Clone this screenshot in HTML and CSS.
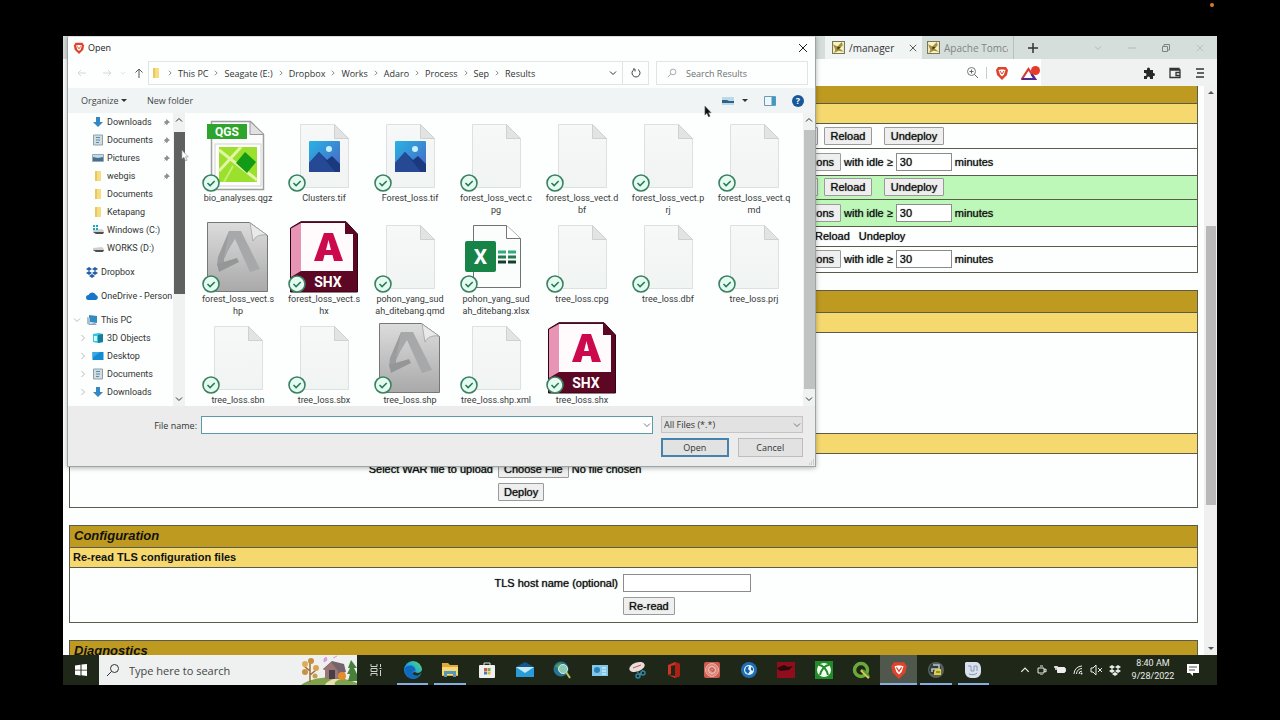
FILE: index.html
```html
<!DOCTYPE html>
<html lang="en">
<head>
<meta charset="utf-8">
<title>/manager</title>
<link rel="stylesheet" href="styles.css">
</head>
<body>
<svg class="defs" aria-hidden="true">
  <defs>
    <linearGradient id="paper" x1="0" y1="0" x2="0" y2="1"><stop offset="0" stop-color="#f7f8f8"/><stop offset="1" stop-color="#f0f4f2"/></linearGradient>
    <linearGradient id="steel" x1="0" y1="0" x2="0" y2="1"><stop offset="0" stop-color="#dcdcdc"/><stop offset="1" stop-color="#a9a9a9"/></linearGradient>
    <linearGradient id="sky" x1="0" y1="0" x2="1" y2="1"><stop offset="0" stop-color="#27b4e4"/><stop offset="1" stop-color="#4d61c4"/></linearGradient>
    <linearGradient id="edge" x1="0" y1="1" x2="1" y2="0"><stop offset="0" stop-color="#0b5fc0"/><stop offset=".5" stop-color="#1ca6dd"/><stop offset="1" stop-color="#62dd65"/></linearGradient>
  </defs>
  <symbol id="ok" viewBox="0 0 18 18"><circle cx="9" cy="9" r="8" fill="#e4fbf0" stroke="#3b8062" stroke-width="1.600"/><path d="M5.500 9l2.600 2.600 4.600-4.700" fill="none" stroke="#28795a" stroke-width="1.500"/></symbol>
  <symbol id="blank" viewBox="0 0 72 72"><path d="M12.500 4.500h34l14 14v49h-48z" fill="url(#paper)" stroke="#dedfe0"/><path d="M46.500 4.500v14h14z" fill="#e2e3e3" stroke="#cfd0d1"/></symbol>
  <symbol id="tif" viewBox="0 0 72 72"><use href="#blank"/><rect x="21" y="21" width="31" height="31" rx="1" fill="url(#sky)"/><path d="M21 43l10-11 8 8 5-4 8 8v8H21z" fill="#1b397f"/><path d="M21 43l10-11 16 20H21z" fill="#254995"/><circle cx="41" cy="29" r="3" fill="#c5f2ff"/></symbol>
  <symbol id="qgs" viewBox="0 0 72 72"><path d="M9.500 1.500h39l13 13v55h-52z" fill="#fbfcfb" stroke="#9da09f" stroke-width="1.500"/><path d="M48 1.500v13h14z" fill="#e1e1e1" stroke="#999"/><rect x="13" y="24" width="46" height="42" fill="#fff" stroke="#cfd3cd"/><rect x="17" y="27" width="38" height="35" fill="#9be02c"/><path d="M17 30l38 30M17 51l22-24" stroke="#e3f5a4" stroke-width="3" fill="none"/><path d="M31 46l-9 16" stroke="#c4ee74" stroke-width="2" fill="none"/><path d="M43 32l11 10-9 11-11-10z" fill="#119b16"/><rect x="5" y="4" width="40" height="15" fill="#2da52c"/><text x="25" y="16" text-anchor="middle" class="ic-text" font-size="12">QGS</text></symbol>
  <symbol id="shp" viewBox="0 0 72 72"><path d="M5.500 1.500h42l18 13v56h-60z" fill="url(#steel)" stroke="#777"/><path d="M48 2l3 18c2-4 6-7 14-6z" fill="#e9e9e9" stroke="#999" stroke-width=".7"/><path d="M27 10h8L22 38v9l-7-3 1-8z" fill="#9b9c9d"/><path d="M27 10h12l19 38-10 3-15-33-11 18z" fill="#a7a8a9"/><path d="M15 43l20-6 2 4-20 10z" fill="#959697"/></symbol>
  <symbol id="shx" viewBox="0 0 72 72"><path d="M2.500 7L13 .700h45L69.500 13v58H2.500z" fill="#5c0724" stroke="#310413"/><path d="M3 7.500L13 2v48L3 56z" fill="#e895b5"/><path d="M13 2h44v11h8v37H13z" fill="#fffafb"/><path d="M36 12h9l10 28h-9l-1.500-6h-8L35 40h-9zM40.500 19l-2.500 10h5z" fill="#cc094c" fill-rule="evenodd"/><text x="40" y="66" text-anchor="middle" class="ic-text" font-size="14">SHX</text></symbol>
  <symbol id="xlsx" viewBox="0 0 72 72"><path d="M13.500 4.500h33l14 13v49h-47z" fill="#fbfcfc" stroke="#6f7373"/><path d="M46.500 4.500v13h14" fill="#fff" stroke="#777"/><rect x="5" y="20" width="31" height="31" rx="2" fill="#178347"/><path d="M38 31h8m2 0h8" stroke="#31ac78" stroke-width="3"/><path d="M38 36h8m2 0h8" stroke="#207b50" stroke-width="3"/><path d="M38 41h8m2 0h8" stroke="#173e2c" stroke-width="3"/><text x="20.500" y="43" text-anchor="middle" class="ic-text" font-size="21">X</text></symbol>
  <symbol id="folder" viewBox="0 0 12 12"><path d="M3 1h6v10H3z" fill="#f5dd83"/><path d="M3 1h2v10H3z" fill="#e9c75c"/></symbol>
  <symbol id="down" viewBox="0 0 12 12"><path d="M4 1h4v5h3l-5 5-5-5h3z" fill="#3287c4"/></symbol>
  <symbol id="docs" viewBox="0 0 12 12"><path d="M1.500 1h9v10h-9z" fill="#cfdce1" stroke="#8ea2aa"/><path d="M4 3.500h4M4 6h4M4 8.500h3" stroke="#5c8aa0"/></symbol>
  <symbol id="pics" viewBox="0 0 12 12"><path d="M.500 2.500h11v7H.500z" fill="#bfdbe9" stroke="#98a9b3"/><path d="M1 5l5 1 5-1v4H1z" fill="#46708b"/></symbol>
  <symbol id="drive" viewBox="0 0 12 12"><path d="M1 6l9-1 2 2-1 3H4L1 8z" fill="#cfcfcf"/><path d="M1 8l3 2h7l1-2H4z" fill="#4d4f50"/></symbol>
  <symbol id="windrive" viewBox="0 0 12 12"><use href="#drive"/><path d="M1 1h2v2H1zm3 0h2v2H4zM1 4h2v2H1zm3 0h2v2H4z" fill="#1aa6cb"/></symbol>
  <symbol id="dropbox" viewBox="0 0 12 12"><path d="M3 1l3 2-3 2-3-2zm6 0l3 2-3 2-3-2zM3 5l3 2-3 2-3-2zm6 0l3 2-3 2-3-2zM6 8l3 2-3 2-3-2z" fill="currentColor"/></symbol>
  <symbol id="cloud" viewBox="0 0 12 12"><path d="M2.500 10a2.500 2.500 0 010-5A4 4 0 0110 5a2.600 2.600 0 010 5z" fill="#1877c9"/></symbol>
  <symbol id="pc" viewBox="0 0 12 12"><path d="M3 1l8 1v7L3 8z" fill="#328bc3"/><path d="M1 3l3 1v6H1z" fill="#abc0cc"/><path d="M2 10l7-1 2 2H3z" fill="#88a8ba"/></symbol>
  <symbol id="cube" viewBox="0 0 12 12"><path d="M1 2l6-1 4 1v8l-5 1-5-1z" fill="#38c3dc"/><path d="M6 3l5-1v8l-5 1z" fill="#127f9c"/><path d="M2 4h3v5H2z" fill="#d0f8ff"/></symbol>
  <symbol id="desk" viewBox="0 0 12 12"><path d="M.500 2h11v8H.500z" fill="#118bd1"/><path d="M.500 2H8L.500 8z" fill="#38a7e7"/></symbol>
  <symbol id="pin" viewBox="0 0 8 8"><path d="M4 0l4 4-2 .500L4.500 7 3 5.500 0 8l2.500-3L1 3.500 3.500 2z" fill="#8a9192"/></symbol>
  <symbol id="cr" viewBox="0 0 8 8"><path d="M2.500 1l3 3-3 3" fill="none" stroke="currentColor"/></symbol>
  <symbol id="cd" viewBox="0 0 8 8"><path d="M1 2.500l3 3 3-3" fill="none" stroke="currentColor"/></symbol>
  <symbol id="cu" viewBox="0 0 8 8"><path d="M1 5.500l3-3 3 3" fill="none" stroke="currentColor" stroke-width="1"/></symbol>
  <symbol id="x" viewBox="0 0 10 10"><path d="M1 1l8 8M9 1L1 9" fill="none" stroke="currentColor"/></symbol>
  <symbol id="glass" viewBox="0 0 14 14"><circle cx="8.500" cy="5.500" r="4" fill="none" stroke="currentColor"/><path d="M5.500 8.500L1 13" stroke="currentColor"/></symbol>
  <symbol id="brave" viewBox="0 0 14 14"><path d="M3 1h8l2 3-1 5-5 5-5-5-1-5z" fill="#e0432c"/><path d="M3.500 4L6 3.500h2l2.500.500L9 8.500l-2 2-2-2z" fill="#fff" /><path d="M5 5l2 3 2-3" stroke="#dd4731" fill="none"/></symbol>
  <symbol id="tomcat" viewBox="0 0 12 12"><path d="M.500.500h11v11H.500z" fill="#f8f2c5" stroke="#77765b"/><path d="M1 3l4 2 4-4 1 3-3 3 4 3-5-1-4 2 1-3z" fill="#a4913c"/><path d="M5 5l3 1-3 2" fill="#393a2a"/></symbol>
  <symbol id="arrow" viewBox="0 0 10 14"><path d="M1 1v10l2.300-2 1.700 4 1.800-.800L5 8.500h3z" fill="currentColor" stroke="#777" stroke-width=".6"/></symbol>
</svg>

<div class="screen">
  <span class="rec"></span>
  <main class="browser">
    <div class="tabs">
      <div class="tab active"><svg class="i13"><use href="#tomcat"/></svg><span>/manager</span><button aria-label="Close tab"><svg class="i8"><use href="#x"/></svg></button></div>
      <div class="tab"><svg class="i13"><use href="#tomcat"/></svg><span class="cut">Apache Tomcat</span></div>
      <button class="newtab" aria-label="New tab"><svg class="i10" viewBox="0 0 10 10"><path d="M5 0v10M0 5h10" stroke="#333" stroke-width="1.500"/></svg></button>
      <div class="winctl">
        <button aria-label="Tab search"><svg class="i8"><use href="#cd"/></svg></button>
        <button aria-label="Minimize"><svg class="i8" viewBox="0 0 8 8"><path d="M0 4h8" stroke="currentColor"/></svg></button>
        <button aria-label="Restore"><svg class="i8 dark" viewBox="0 0 8 8"><path d="M.500 2.500h5v5h-5zM2 2V.500h5.500V6H6" fill="none" stroke="currentColor"/></svg></button>
        <button aria-label="Close window"><svg class="i8"><use href="#x"/></svg></button>
      </div>
    </div>
    <div class="bar">
      <div class="urlbar">
        <svg class="i11" viewBox="0 0 11 11"><circle cx="4.500" cy="4.500" r="4" fill="none" stroke="#777"/><path d="M7.500 7.500L11 11M2.500 4.500h4M4.500 2.500v4" stroke="#666"/></svg>
        <i class="sep"></i>
        <svg class="i14"><use href="#brave"/></svg>
        <svg class="bat" viewBox="0 0 20 14"><path d="M7.500 3L14 13H1z" fill="none" stroke="#d43c3b" stroke-width="2.200"/><path d="M1 13h13L10.500 8" fill="none" stroke="#4d2b94" stroke-width="2.200"/><circle cx="14.500" cy="4.500" r="4.500" fill="#e83a2a"/></svg>
      </div>
      <div class="ext">
        <svg class="i12" viewBox="0 0 12 12"><path d="M1 3h3V2a1.500 1.500 0 013 0v1h3v3h.500a1.500 1.500 0 010 3H10v3H7v-1a1.500 1.500 0 00-3 0v1H1V9h1a1.500 1.500 0 000-3H1z" fill="#252a29"/></svg>
        <svg class="i12" viewBox="0 0 12 12"><path d="M10 3V1.500H1v9h10V3H1.500M11 5.500H7v3h4" fill="none" stroke="#333" stroke-width="1.300"/></svg>
        <svg class="i10" viewBox="0 0 10 10"><path d="M1 1h8M2 5h7M1 9h8" stroke="#333" stroke-width="1.300"/></svg>
      </div>
    </div>
    <div class="view">
      <div class="page">
        <section class="tbl apps">
          <div class="gold"></div>
          <div class="sub"></div>
          <div class="row acts"><button>Stop</button><button>Reload</button><button class="und">Undeploy</button></div>
          <form class="row exp"><button type="button">Expire sessions</button><label for="i1">with idle ≥</label><input id="i1" value="30"><span>minutes</span></form>
          <div class="row acts green low"><button>Stop</button><button>Reload</button><button class="und">Undeploy</button></div>
          <form class="row exp green"><button type="button">Expire sessions</button><label for="i2">with idle ≥</label><input id="i2" value="30"><span>minutes</span></form>
          <div class="row plain"><span>Reload</span><span>Undeploy</span></div>
          <form class="row exp"><button type="button">Expire sessions</button><label for="i3">with idle ≥</label><input id="i3" value="30"><span>minutes</span></form>
        </section>
        <section class="tbl">
          <div class="gold"></div>
          <div class="sub"></div>
          <div class="row tall"></div>
          <div class="sub"></div>
          <form class="row frm war">
            <label for="war">Select WAR file to upload</label>
            <div class="pick"><button type="button" id="war">Choose File</button><span>No file chosen</span></div>
            <button type="button" class="go">Deploy</button>
          </form>
        </section>
        <section class="tbl">
          <h2 class="gold">Configuration</h2>
          <h3 class="sub">Re-read TLS configuration files</h3>
          <form class="row frm tls">
            <label for="tls">TLS host name (optional)</label>
            <input id="tls">
            <button type="button" class="go">Re-read</button>
          </form>
        </section>
        <section class="tbl"><h2 class="gold">Diagnostics</h2></section>
      </div>
      <div class="vscroll"><i class="tri up"></i><i class="thumb"></i><i class="tri dn"></i></div>
    </div>
  </main>

  <div class="dialog" role="dialog" aria-label="Open">
    <div class="title"><svg class="i12"><use href="#brave"/></svg><span>Open</span><button aria-label="Close"><svg class="i10"><use href="#x"/></svg></button></div>
    <div class="addr">
      <div class="navs">
        <svg class="i10 pale" viewBox="0 0 10 10"><path d="M9 5H1m3-3L1 5l3 3" fill="none" stroke="currentColor"/></svg>
        <svg class="i10 pale mid" viewBox="0 0 10 10"><path d="M1 5h8M6 2l3 3-3 3" fill="none" stroke="currentColor"/></svg>
        <svg class="i6 pale"><use href="#cd"/></svg>
        <svg class="i10" viewBox="0 0 10 10"><path d="M5 10V1M1.500 4.500L5 1l3.500 3.500" fill="none" stroke="#555"/></svg>
      </div>
      <div class="crumbs">
        <svg class="i12"><use href="#folder"/></svg>
        <svg class="c"><use href="#cr"/></svg><span>This PC</span>
        <svg class="c"><use href="#cr"/></svg><span>Seagate (E:)</span>
        <svg class="c"><use href="#cr"/></svg><span>Dropbox</span>
        <svg class="c"><use href="#cr"/></svg><span>Works</span>
        <svg class="c"><use href="#cr"/></svg><span>Adaro</span>
        <svg class="c"><use href="#cr"/></svg><span>Process</span>
        <svg class="c"><use href="#cr"/></svg><span>Sep</span>
        <svg class="c"><use href="#cr"/></svg><span>Results</span>
        <svg class="i8 drop"><use href="#cd"/></svg>
        <button class="refresh" aria-label="Refresh"><svg class="i10" viewBox="0 0 10 10"><path d="M7 1.500a4 4 0 11-4 0M2 1h2v2.500" fill="none" stroke="#444"/></svg></button>
      </div>
      <div class="find"><svg class="i10"><use href="#glass"/></svg><input placeholder="Search Results" aria-label="Search Results"></div>
    </div>
    <div class="cmd">
      <button>Organize <i class="caret"></i></button><button>New folder</button>
      <div class="views">
        <svg class="i12" viewBox="0 0 12 12"><path d="M0 2h12v8H0z" fill="#bcd9e9"/><path d="M0 5h5l2 1h5v2H0z" fill="#2f6381"/></svg>
        <i class="caret"></i>
        <svg class="i12 pane" viewBox="0 0 12 12"><path d="M.500 1.500h11v9H.500z" fill="#eef8fc" stroke="#6c9cb4"/><path d="M7.500 2h4v8h-4z" fill="#4298c4"/></svg>
        <button class="help" aria-label="Help">?</button>
      </div>
    </div>
    <div class="body">
      <nav class="tree">
        <a><svg class="i12"><use href="#down"/></svg>Downloads<svg class="pin"><use href="#pin"/></svg></a>
        <a><svg class="i12"><use href="#docs"/></svg>Documents<svg class="pin"><use href="#pin"/></svg></a>
        <a><svg class="i12"><use href="#pics"/></svg>Pictures<svg class="pin"><use href="#pin"/></svg></a>
        <a><svg class="i12"><use href="#folder"/></svg>webgis<svg class="pin"><use href="#pin"/></svg></a>
        <a><svg class="i12"><use href="#folder"/></svg>Documents</a>
        <a><svg class="i12"><use href="#folder"/></svg>Ketapang</a>
        <a><svg class="i12"><use href="#windrive"/></svg>Windows (C:)</a>
        <a><svg class="i12"><use href="#drive"/></svg>WORKS (D:)</a>
        <a class="root"><svg class="i12 blue"><use href="#dropbox"/></svg>Dropbox</a>
        <a class="root"><svg class="i12"><use href="#cloud"/></svg>OneDrive - Person</a>
        <a class="root open"><svg class="tw"><use href="#cd"/></svg><svg class="i12"><use href="#pc"/></svg>This PC</a>
        <a class="kid"><svg class="tw"><use href="#cr"/></svg><svg class="i12"><use href="#cube"/></svg>3D Objects</a>
        <a class="kid"><svg class="tw"><use href="#cr"/></svg><svg class="i12"><use href="#desk"/></svg>Desktop</a>
        <a class="kid"><svg class="tw"><use href="#cr"/></svg><svg class="i12"><use href="#docs"/></svg>Documents</a>
        <a class="kid"><svg class="tw"><use href="#cr"/></svg><svg class="i12"><use href="#down"/></svg>Downloads</a>
      </nav>
      <div class="sb dark"><svg class="i8"><use href="#cu"/></svg><i class="thumb"></i><svg class="i8"><use href="#cd"/></svg></div>
      <div class="files">
        <figure><svg><use href="#qgs"/></svg><svg class="ok"><use href="#ok"/></svg><figcaption>bio_analyses.qgz</figcaption></figure>
        <figure><svg><use href="#tif"/></svg><svg class="ok"><use href="#ok"/></svg><figcaption>Clusters.tif</figcaption></figure>
        <figure><svg><use href="#tif"/></svg><svg class="ok"><use href="#ok"/></svg><figcaption>Forest_loss.tif</figcaption></figure>
        <figure><svg><use href="#blank"/></svg><svg class="ok"><use href="#ok"/></svg><figcaption>forest_loss_vect.c<br>pg</figcaption></figure>
        <figure><svg><use href="#blank"/></svg><svg class="ok"><use href="#ok"/></svg><figcaption>forest_loss_vect.d<br>bf</figcaption></figure>
        <figure><svg><use href="#blank"/></svg><svg class="ok"><use href="#ok"/></svg><figcaption>forest_loss_vect.p<br>rj</figcaption></figure>
        <figure><svg><use href="#blank"/></svg><svg class="ok"><use href="#ok"/></svg><figcaption>forest_loss_vect.q<br>md</figcaption></figure>
        <figure><svg><use href="#shp"/></svg><svg class="ok"><use href="#ok"/></svg><figcaption>forest_loss_vect.s<br>hp</figcaption></figure>
        <figure><svg><use href="#shx"/></svg><svg class="ok"><use href="#ok"/></svg><figcaption>forest_loss_vect.s<br>hx</figcaption></figure>
        <figure><svg><use href="#blank"/></svg><svg class="ok"><use href="#ok"/></svg><figcaption>pohon_yang_sud<br>ah_ditebang.qmd</figcaption></figure>
        <figure><svg><use href="#xlsx"/></svg><svg class="ok"><use href="#ok"/></svg><figcaption>pohon_yang_sud<br>ah_ditebang.xlsx</figcaption></figure>
        <figure><svg><use href="#blank"/></svg><svg class="ok"><use href="#ok"/></svg><figcaption>tree_loss.cpg</figcaption></figure>
        <figure><svg><use href="#blank"/></svg><svg class="ok"><use href="#ok"/></svg><figcaption>tree_loss.dbf</figcaption></figure>
        <figure><svg><use href="#blank"/></svg><svg class="ok"><use href="#ok"/></svg><figcaption>tree_loss.prj</figcaption></figure>
        <figure><svg><use href="#blank"/></svg><svg class="ok"><use href="#ok"/></svg><figcaption>tree_loss.sbn</figcaption></figure>
        <figure><svg><use href="#blank"/></svg><svg class="ok"><use href="#ok"/></svg><figcaption>tree_loss.sbx</figcaption></figure>
        <figure><svg><use href="#shp"/></svg><svg class="ok"><use href="#ok"/></svg><figcaption>tree_loss.shp</figcaption></figure>
        <figure><svg><use href="#blank"/></svg><svg class="ok"><use href="#ok"/></svg><figcaption>tree_loss.shp.xml</figcaption></figure>
        <figure><svg><use href="#shx"/></svg><svg class="ok"><use href="#ok"/></svg><figcaption>tree_loss.shx</figcaption></figure>
      </div>
      <div class="sb light"><svg class="i8"><use href="#cu"/></svg><i class="thumb"></i><svg class="i8"><use href="#cd"/></svg></div>
    </div>
    <div class="foot">
      <label for="fn">File name:</label>
      <div class="combo"><input id="fn" autofocus><svg class="i8"><use href="#cd"/></svg></div>
      <div class="type"><select aria-label="File type"><option>All Files (*.*)</option></select><svg class="i8"><use href="#cd"/></svg></div>
      <div class="btns"><button class="primary">Open</button><button>Cancel</button></div>
    </div>
    <svg class="grip" viewBox="0 0 7 7"><path d="M5 1h1M3 3h1m1 0h1M1 5h1m1 0h1m1 0h1" stroke="#aaa"/></svg>
    <svg class="ptr one"><use href="#arrow"/></svg>
    <svg class="ptr two"><use href="#arrow"/></svg>
  </div>

  <footer class="taskbar">
    <button class="start" aria-label="Start"><svg class="i12" viewBox="0 0 12 12"><path d="M0 1.500l5.500-.800v5H0zM6.500.600L12 0v5.700H6.500zM0 6.500h5.500v5L0 10.700zM6.500 6.500H12V12l-5.500-.700z" fill="#fff"/></svg></button>
    <div class="search">
      <svg class="i14"><use href="#glass"/></svg>
      <input placeholder="Type here to search" aria-label="Type here to search">
      <svg class="scene" viewBox="0 0 56 30"><path d="M0 30c12-9 38-10 56-2v2z" fill="#7fa34a"/><path d="M24 30c2-4 8-6 12-7l4 1c-6 2-7 4-6 6z" fill="#e8dfae"/><path d="M9 27V8M9 16l-6-5M9 20l6-5" stroke="#a06a35" stroke-width="1.500"/><circle cx="4" cy="9" r="3" fill="#dcae5a"/><circle cx="10" cy="6" r="3" fill="#c98c3c"/><circle cx="15" cy="13" r="3" fill="#dba44c"/><circle cx="4" cy="17" r="3" fill="#cb9142"/><circle cx="14" cy="21" r="2.500" fill="#c3a046"/><path d="M22 14l9-8 12 3 2 8-3 1v6H24v-9z" fill="#75636e"/><path d="M22 15l8-8 7 9v8H24v-9z" fill="#9a7774"/><path d="M28 15h6v9h-6z" fill="#493e48"/><path d="M50 5l6 8h-3l3 6v7H47l2-7h-3l3-6h-2z" fill="#477f3b"/><circle cx="41" cy="21" r="4" fill="#e58d2e"/><path d="M23 4l2-2 1 3-3 2zM32 3l4-2" stroke="#d99ad9" fill="#d8a1e4"/></svg>
    </div>
    <button class="tv" aria-label="Task view"><svg class="i12" viewBox="0 0 12 12"><path d="M1 0v2.500h6V0M1 12V9.500h6V12M1 4.500h6v3H1zM10.500 0v3M10.500 6v6M9.500 4.500h2" fill="none" stroke="#cdd3cc"/></svg></button>
    <div class="apps16">
      <button class="run" aria-label="Edge"><svg viewBox="0 0 18 18"><circle cx="9" cy="9" r="9" fill="url(#edge)"/><path d="M1 7c4-5 11-2 10 2-1 2-3 1-2 4 2 2 5 2 7 1-3 5-10 5-13 0-2-3-2-5-2-7z" fill="#1168bd"/><path d="M11 8c2 4-5 3-1 6 3 1 5 1 6-1l2-1V9c-1 3-5 4-7 2z" fill="#202b19"/></svg></button>
      <button class="run" aria-label="Files"><svg viewBox="0 0 18 18"><path d="M1 2h6l2 2h8v11H1z" fill="#e0aa38"/><path d="M1 6h16v8H1z" fill="#f8d97a"/><path d="M3 16v-6h12v6h-3v-3H6v3z" fill="#5597b5"/></svg></button>
      <button aria-label="Store"><svg viewBox="0 0 18 18"><path d="M6 5V2h6v3" fill="none" stroke="#d7e2df"/><rect x="1" y="4" width="16" height="13" rx="1" fill="#eef1ee"/><path d="M6 7h3v3H6z" fill="#db543b"/><path d="M9.500 7h3v3h-3z" fill="#77a843"/><path d="M6 10.500h3v3H6z" fill="#3a84bd"/><path d="M9.500 10.500h3v3h-3z" fill="#e5b739"/></svg></button>
      <button aria-label="Mail"><svg viewBox="0 0 18 18"><path d="M0 6l9-5 9 5v10H0z" fill="#145491"/><path d="M0 6h18v10H0z" fill="#289bd9"/><path d="M0 6h18l-9 6z" fill="#c7eaf7"/></svg></button>
      <button aria-label="Search tool"><svg viewBox="0 0 18 18"><circle cx="8" cy="8" r="7.500" fill="#267493"/><path d="M2 5l5-3 3 2-4 4z" fill="#4f9b56"/><circle cx="10" cy="8" r="4.500" fill="#8cc8b0" stroke="#d5eee7"/><path d="M13 11l4 6" stroke="#bcc46b" stroke-width="2"/></svg></button>
      <button aria-label="Control panel"><svg viewBox="0 0 18 18"><path d="M1 4h16v11H1z" fill="#83c7e8"/><circle cx="6" cy="9" r="3" fill="#2c83b9"/><path d="M11 7h4M11 10h4M11 13h4" stroke="#e6f8fd"/></svg></button>
      <button aria-label="Snipping"><svg viewBox="0 0 18 18"><ellipse cx="9" cy="6" rx="8" ry="4.500" transform="rotate(-20 9 6)" fill="#e9dcd9"/><path d="M5 7l8-3" stroke="#b6595a"/><path d="M8 10l5 4m2-5l-4 6" stroke="#6c8c9c"/><circle cx="10" cy="15" r="2" fill="none" stroke="#2f83aa" stroke-width="1.500"/><circle cx="15" cy="12" r="2" fill="none" stroke="#2f83aa" stroke-width="1.500"/></svg></button>
      <button aria-label="Office"><svg viewBox="0 0 18 18"><path d="M3 4l7-3 5 2v12l-5 2-7-3 7 1V4L6 5v8l-3 1z" fill="#d23420"/><path d="M10 1l5 2v12l-5 2z" fill="#ad2018"/></svg></button>
      <button aria-label="Rose"><svg viewBox="0 0 18 18"><rect x="1" y="1" width="16" height="16" rx="2" fill="#cc5b50"/><circle cx="9" cy="9" r="6.500" fill="#dc897d" stroke="#edb0a5" stroke-width="1"/><circle cx="9" cy="9" r="3.500" fill="none" stroke="#f2c4b8" stroke-width="1"/><path d="M7 9c0-3 4-2 4 0s-3 2-2 0" fill="none" stroke="#b8493f"/></svg></button>
      <button aria-label="Globe"><svg viewBox="0 0 18 18"><circle cx="9" cy="9" r="8" fill="#1f6db5"/><circle cx="9" cy="9" r="5" fill="#dff1fa"/><path d="M6 6l3-1-1 3 2 2-2 3-3-3zM11 6l2 1v3l-2-1z" fill="#1963a8"/></svg></button>
      <button aria-label="Red app"><svg viewBox="0 0 18 18"><path d="M0 1h18v16H0z" fill="#900d1c"/><path d="M0 7l7-3 4 2 5-1-4 4-9 1z" fill="#2a0a0f"/></svg></button>
      <button aria-label="Xbox"><svg viewBox="0 0 18 18"><path d="M0 0h18v18H0z" fill="#218a29"/><circle cx="9" cy="9" r="7" fill="#f2fff0"/><path d="M4 4c4 0 8 5 9 10M14 4c-4 0-8 5-9 10" stroke="#218a29" stroke-width="2" fill="none"/></svg></button>
      <button aria-label="QGIS"><svg viewBox="0 0 18 18"><circle cx="9" cy="9" r="6.500" fill="none" stroke="#6ca93b" stroke-width="3.500"/><path d="M9 9l8 8" stroke="#d9ca59" stroke-width="2.500"/><path d="M11 9l6 6" stroke="#5a9a35" stroke-width="2"/></svg></button>
      <button class="run on" aria-label="Brave"><svg><use href="#brave"/></svg></button>
      <button class="run" aria-label="Python"><svg viewBox="0 0 18 18"><circle cx="9" cy="9" r="8" fill="#5c625b"/><path d="M4 3h8l2 3v7H4l-2-4z" fill="#303d42"/><path d="M6 4h6v4H5v3" fill="none" stroke="#bec9ca" stroke-width="1.500"/><path d="M8 8h6v6H7v-3z" fill="#ddd143"/><path d="M9 11h4" stroke="#45501d"/></svg></button>
      <button class="run" aria-label="Database"><svg viewBox="0 0 18 18"><path d="M1 2l1-1h10c3 0 5 3 5 7v3c0 3-3 6-6 6H7c-3 0-6-3-6-6z" fill="#dbe1ec"/><path d="M4 5h3v5h3V5h3v5" fill="none" stroke="#8698ba"/><path d="M5 13c3 1 6 1 8-1" fill="none" stroke="#7e91b5"/></svg></button>
    </div>
    <div class="tray">
      <svg class="i10" ><use href="#cu"/></svg>
      <svg class="i10" viewBox="0 0 10 10"><path d="M1 3h6v5H1zM7 5l2-1v3L7 6M3 1h3M3 10h3" fill="none" stroke="currentColor"/></svg>
      <svg class="i12" viewBox="0 0 12 12"><path d="M3.500 3.500h7v5h-7z" fill="#eee" stroke="#eee"/><path d="M11 5h1v2h-1M0 3h4M2 2v4" stroke="#eee" stroke-width="1.500"/></svg>
      <svg class="i10" viewBox="0 0 10 10"><path d="M1 9A8 8 0 019 1M3.500 9A5.500 5.500 0 019 3.500M6 9a3 3 0 013-3" fill="none" stroke="currentColor"/><circle cx="8.500" cy="8.500" r="1" fill="currentColor"/></svg>
      <svg class="i12" viewBox="0 0 12 12"><path d="M1 4h2l3-3v10L3 8H1zM8 4l4 4m0-4L8 8" fill="none" stroke="currentColor"/></svg>
      <svg class="i12"><use href="#dropbox"/></svg>
      <div class="clock"><span>8:40 AM</span><span>9/28/2022</span></div>
      <svg class="i12 note" viewBox="0 0 12 12"><path d="M0 0h12v9H6v3L3 9H0z" fill="#fff"/><path d="M2 3h8M2 6h6" stroke="#4a5046"/></svg>
    </div>
  </footer>
</div>
</body>
</html>
```
FILE: styles.css
```css
* { box-sizing: border-box; }
body { margin: 0; background: #000; font-family: "Open Sans", "Noto Sans", sans-serif; font-size: 9px; color: #333; }
button, input, select { font: inherit; color: inherit; margin: 0; padding: 0; border: 0; background: none; border-radius: 0; outline: 0; }
svg { flex: none; display: block; }
h2, h3, figure { margin: 0; }
.defs { position: absolute; width: 0; height: 0; }
.ic-text { font-family: Roboto, sans-serif; font-weight: 700; fill: #fff; }
.i6 { width: 6px; height: 6px; }
.i8 { width: 8px; height: 8px; }
.i10 { width: 10px; height: 10px; }
.i11 { width: 11px; height: 11px; }
.i12 { width: 12px; height: 12px; }
.i13 { width: 13px; height: 13px; }
.i14 { width: 14px; height: 14px; }

.screen { height: 100vh; padding: 36px 63px 35px; display: flex; flex-direction: column; position: relative; }
.rec { position: absolute; right: 66px; top: 3px; width: 4px; height: 4px; border-radius: 50%; background: #d97a24; }
.browser { flex: 1; min-height: 0; display: flex; flex-direction: column; background: #fcfffe; }

.tabs { height: 23px; flex: none; background: #d6dedc; display: flex; padding-left: 762px; color: #7d8583; font-size: 10px; }
.tab { display: flex; align-items: center; gap: 4px; padding: 0 5px 0 5px; width: 92px; border-right: 1px solid #b9c1bf; }
.tab.active { background: #f0f4f3; color: #333; width: 97px; border: 0; padding-left: 7px; }
.tab.active button { margin-left: auto; }
.cut { overflow: hidden; white-space: nowrap; }
.newtab { margin-left: 14px; display: flex; align-items: center; }
.newtab svg { margin: auto; }
.winctl { margin-left: auto; display: flex; gap: 26px; padding-right: 13px; align-items: center; color: #b2b9b7; }
.winctl .dark { color: #7e8583; }
.bar { height: 27px; flex: none; display: flex; background: #f0f2f1; }
.urlbar { width: 978px; background: #fcfffe; display: flex; align-items: center; justify-content: flex-end; }
.sep { width: 1px; height: 12px; background: #ccc; margin: 0 8px; }
.bat { width: 20px; height: 14px; margin-left: 12px; }
.ext { margin-left: auto; display: flex; align-items: center; gap: 14px; padding-right: 12px; }

.view { flex: 1; min-height: 0; display: flex; font-family: "Liberation Sans", Arial, sans-serif; font-size: 11px; color: #111; }
.page { flex: 1; min-width: 0; overflow: hidden; padding: 0 6px; display: flex; flex-direction: column; gap: 17px; }
.tbl { border: 1px solid #5b5b4c; border-top: 0; flex: none; }
.gold, .sub, .row { border-top: 1px solid #5b5b4c; }
.gold { height: 22px; background: #be9a20; font-size: 13px; line-height: 20px; font-style: italic; font-weight: 700; padding-left: 4px; }
.sub { height: 20px; background: #f5d96e; font-size: 11px; line-height: 19px; font-weight: 700; padding-left: 3px; }
.apps .gold { height: 17px; border: 0; }
.row { display: flex; align-items: center; padding: 0 0 1px 722px; min-height: 27px; text-shadow: 0 0 1px #333; }
.row:last-child { min-height: 26px; }
.view button { height: 18px; padding: 0 5px; background: #efefef; border: 1px solid #9a9a9a; border-radius: 1px; white-space: nowrap; text-shadow: inherit; }
.view input { background: #fff; border: 1px solid #8b8b8b; text-shadow: inherit; }
.acts { min-height: 25px; }
.acts.low { min-height: 24px; }
.row.acts { padding-left: 700px; }
.acts button { width: 48px; margin-right: 6px; padding: 0; }
.acts .und { width: 60px; margin-left: 6px; }
.row.exp { padding-left: 680px; gap: 3px; }
.exp button { width: 91px; }
.exp input { width: 56px; height: 18px; padding: 0 3px; }
.green { background: #bdf8b8; }
.row.plain { min-height: 20px; padding-left: 745px; gap: 9px; }
.tall { min-height: 101px; }
.row.frm { display: grid; grid-template-columns: 423px 1fr; gap: 5px; padding: 0 0 1px; justify-items: start; align-content: center; }
.frm label { justify-self: end; }
.frm .go { grid-column: 2; }
.row.war { min-height: 54px; }
.pick { display: flex; gap: 3px; align-items: center; }
.row.tls { min-height: 55px; grid-template-columns: 548px 1fr; }
.tls input { width: 128px; height: 18px; }
.vscroll { width: 13px; background: #f0f0f0; display: flex; flex-direction: column; align-items: center; padding: 5px 0; }
.tri { border: 3px solid transparent; }
.tri.up { border-bottom-color: #555; border-top: 0; }
.tri.dn { border-top-color: #555; border-bottom: 0; margin-top: auto; }
.vscroll .thumb { width: 10px; height: 279px; margin-top: 132px; background: #b9b9b9; }

.dialog { position: absolute; left: 67px; top: 36px; width: 749px; height: 431px; background: #fcfffe; border: 1px solid #9ba5a3; border-top-color: #ddd; display: flex; flex-direction: column; box-shadow: 0 1px 5px rgba(0, 0, 0, .3); }
.title { height: 21px; display: flex; align-items: center; gap: 3px; padding: 0 7px 0 5px; color: #222; }
.title button { margin-left: auto; }
.addr { height: 30px; display: flex; align-items: center; padding: 0 7px 0 9px; }
.navs { width: 71px; display: flex; align-items: center; gap: 10px; color: #444; }
.navs .i6 { margin: 0 -2px; }
.navs .mid { margin-left: 5px; }
.pale { color: #d3d8d7; }
.crumbs { flex: 1; height: 24px; border: 1px solid #e0e5e4; display: flex; align-items: center; gap: 5px; white-space: nowrap; color: #333; }
.crumbs > .i12 { margin: 0 0 0 1px; }
.c { width: 6px; height: 6px; color: #666; }
.drop { margin-left: auto; }
.refresh { width: 26px; height: 22px; border-left: 1px solid #e0e5e4; display: grid; place-items: center; }
.find { width: 152px; height: 24px; margin-left: 7px; border: 1px solid #e0e5e4; display: flex; align-items: center; gap: 9px; padding-left: 10px; color: #888; }
.find input { width: 110px; }
input::placeholder { color: #6d7271; opacity: 1; }
.cmd { height: 25px; background: #f1f4f4; display: flex; align-items: center; gap: 20px; padding: 0 11px 0 13px; color: #3d4747; }
.caret { display: inline-block; border: 3px solid transparent; border-top-color: #333; border-bottom: 0; vertical-align: 2px; }
.views { margin-left: auto; display: flex; align-items: center; gap: 8px; }
.pane { margin: 0 8px; }
.help { width: 12px; height: 12px; border-radius: 50%; background: #17589b; color: #fff; line-height: 12px; font-weight: 700; }
.body { flex: 1; min-height: 0; display: flex; }
.tree { width: 105px; overflow: hidden; display: flex; flex-direction: column; font-family: Roboto, sans-serif; }
.tree a { height: 18px; flex: none; display: flex; align-items: center; gap: 3px; padding-left: 24px; white-space: nowrap; }
.tree a.root { padding-left: 18px; margin-top: 6px; }
.tree a.open { padding-left: 5px; }
.tree a.kid { padding-left: 11px; }
.tw { width: 8px; height: 8px; color: #bbb; margin-right: 2px; }
.blue { color: #2461a4; }
.pin { width: 7px; height: 7px; margin: 0 3px 0 auto; }
.sb { width: 12px; background: #f0f1f1; display: flex; flex-direction: column; align-items: center; justify-content: space-between; padding: 3px 0; gap: 6px; }
.sb .thumb { width: 11px; height: 162px; margin: 2px 0 auto; background: #5f6161; }
.sb.light .thumb { background: #c1c3c3; flex: 1; margin: 0; }
.files { flex: 1; min-width: 0; overflow: hidden; display: grid; grid-template-columns: repeat(7, 86px); grid-auto-rows: 101px; padding: 7px 0 0 10px; align-content: start; }
figure { position: relative; display: flex; flex-direction: column; align-items: center; text-align: center; line-height: 12px; color: #3a3a3a; font-family: Roboto, sans-serif; }
figure > svg { width: 72px; height: 72px; }
figure > .ok { position: absolute; left: 7px; top: 54px; width: 18px; height: 18px; }
.foot { height: 60px; background: #ececec; display: grid; grid-template-columns: 129px 1fr 142px; column-gap: 4px; row-gap: 4px; padding: 10px 12px 0 0; align-content: start; color: #333; }
.foot label { justify-self: end; align-self: center; }
.combo, .type { position: relative; height: 18px; }
.combo { margin-right: 4px; }
.combo input { width: 100%; height: 100%; background: #fff; border: 1px solid #5b9aa8; padding: 0 2px; }
.type select { width: 100%; height: 17px; appearance: none; background: #e2e2e2; border: 1px solid #c4c4c4; padding-left: 2px; }
.combo svg, .type svg { position: absolute; right: 2px; top: 5px; color: #777; }
.btns { grid-column: 3; display: flex; gap: 9px; }
.btns button { flex: 1; height: 19px; background: #e2e2e2; border: 1px solid #bdbdbd; }
.btns .primary { border: 2px solid #4583ac; }
.grip { position: absolute; right: 0; bottom: 0; width: 7px; height: 7px; }
.ptr { position: absolute; width: 9px; height: 13px; color: #111; }
.ptr.one { left: 636px; top: 68px; }
.ptr.two { left: 113px; top: 112px; color: #fff; }

.taskbar { height: 30px; flex: none; background: #1f2818; display: flex; color: #e8ece6; }
.start { width: 36px; display: grid; place-items: center; }
.search { width: 258px; background: #eff1f0; display: flex; align-items: center; padding-left: 7px; gap: 9px; color: #333; font-size: 11px; }
.search input { flex: 1; min-width: 0; }
.search input::placeholder { color: #444; }
.scene { width: 56px; height: 30px; }
.tv { width: 37px; display: grid; place-items: center; }
.apps16 { width: 598px; display: grid; grid-template-columns: repeat(16, 1fr); }
.apps16 button { display: grid; place-items: center; margin: 0 3px; }
.apps16 svg { width: 18px; height: 18px; }
.apps16 .run { border-bottom: 2px solid #83b0df; padding-top: 2px; }
.apps16 .on { background: #50584d; margin: 0; }
.tray { margin-left: auto; display: flex; align-items: center; gap: 7px; padding-right: 18px; }
.clock { display: flex; flex-direction: column; text-align: center; line-height: 13px; font-family: Roboto, sans-serif; width: 50px; }
.note { margin-left: 2px; }
```
